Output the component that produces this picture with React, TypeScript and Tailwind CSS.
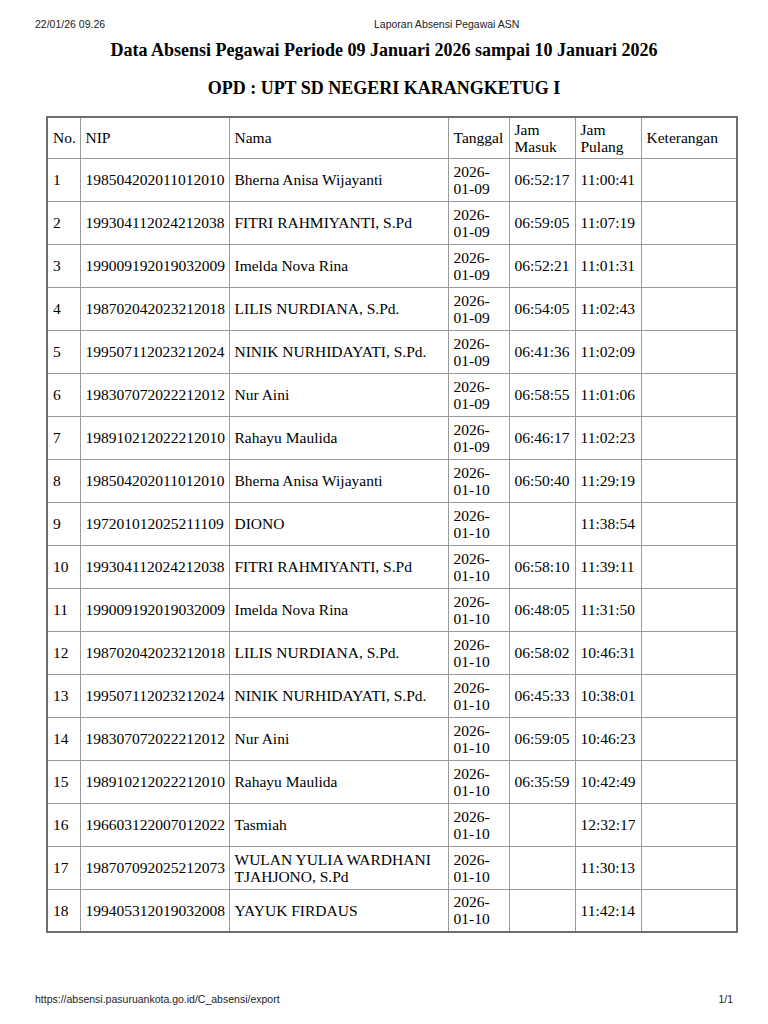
import React from 'react'

type Row = {
  nip: string
  nama: string
  tanggal: string
  masuk: string
  pulang: string
}

const rows: Row[] = [
  { nip: '198504202011012010', nama: 'Bherna Anisa Wijayanti', tanggal: '01-09', masuk: '06:52:17', pulang: '11:00:41' },
  { nip: '199304112024212038', nama: 'FITRI RAHMIYANTI, S.Pd', tanggal: '01-09', masuk: '06:59:05', pulang: '11:07:19' },
  { nip: '199009192019032009', nama: 'Imelda Nova Rina', tanggal: '01-09', masuk: '06:52:21', pulang: '11:01:31' },
  { nip: '198702042023212018', nama: 'LILIS NURDIANA, S.Pd.', tanggal: '01-09', masuk: '06:54:05', pulang: '11:02:43' },
  { nip: '199507112023212024', nama: 'NINIK NURHIDAYATI, S.Pd.', tanggal: '01-09', masuk: '06:41:36', pulang: '11:02:09' },
  { nip: '198307072022212012', nama: 'Nur Aini', tanggal: '01-09', masuk: '06:58:55', pulang: '11:01:06' },
  { nip: '198910212022212010', nama: 'Rahayu Maulida', tanggal: '01-09', masuk: '06:46:17', pulang: '11:02:23' },
  { nip: '198504202011012010', nama: 'Bherna Anisa Wijayanti', tanggal: '01-10', masuk: '06:50:40', pulang: '11:29:19' },
  { nip: '197201012025211109', nama: 'DIONO', tanggal: '01-10', masuk: '', pulang: '11:38:54' },
  { nip: '199304112024212038', nama: 'FITRI RAHMIYANTI, S.Pd', tanggal: '01-10', masuk: '06:58:10', pulang: '11:39:11' },
  { nip: '199009192019032009', nama: 'Imelda Nova Rina', tanggal: '01-10', masuk: '06:48:05', pulang: '11:31:50' },
  { nip: '198702042023212018', nama: 'LILIS NURDIANA, S.Pd.', tanggal: '01-10', masuk: '06:58:02', pulang: '10:46:31' },
  { nip: '199507112023212024', nama: 'NINIK NURHIDAYATI, S.Pd.', tanggal: '01-10', masuk: '06:45:33', pulang: '10:38:01' },
  { nip: '198307072022212012', nama: 'Nur Aini', tanggal: '01-10', masuk: '06:59:05', pulang: '10:46:23' },
  { nip: '198910212022212010', nama: 'Rahayu Maulida', tanggal: '01-10', masuk: '06:35:59', pulang: '10:42:49' },
  { nip: '196603122007012022', nama: 'Tasmiah', tanggal: '01-10', masuk: '', pulang: '12:32:17' },
  { nip: '198707092025212073', nama: 'WULAN YULIA WARDHANI TJAHJONO, S.Pd', tanggal: '01-10', masuk: '', pulang: '11:30:13' },
  { nip: '199405312019032008', nama: 'YAYUK FIRDAUS', tanggal: '01-10', masuk: '', pulang: '11:42:14' },
]

const cell = 'border border-[#9a9a9a] px-[5px] py-0 text-left align-middle font-normal'

export default function App() {
  return (
    <div className="flex min-h-[1024px] w-[768px] flex-col bg-white text-black">
      {/* print header */}
      <div className="flex pl-[35px] pt-[18px] font-['Liberation_Sans',Arial,sans-serif] text-[10.5px] leading-[12px] text-[#222]">
        <span className="w-[339px]">22/01/26 09.26</span>
        <span>Laporan Absensi Pegawai ASN</span>
      </div>

      <div className="font-['Liberation_Serif','Times_New_Roman',serif]">
        <h1 className="mt-[9px] text-center text-[18px] font-bold leading-[22px]">
          Data Absensi Pegawai Periode 09 Januari 2026 sampai 10 Januari 2026
        </h1>
        <h2 className="mt-[16px] text-center text-[18px] font-bold leading-[22px]">
          OPD : UPT SD NEGERI KARANGKETUG I
        </h2>

        <table className="ml-[46px] mt-[17px] w-[690px] table-fixed border-collapse border-2 border-[#6e6e6e] text-[15.5px] leading-[17px]">
          <colgroup>
            <col className="w-[33px]" />
            <col className="w-[149px]" />
            <col className="w-[219px]" />
            <col className="w-[61px]" />
            <col className="w-[66px]" />
            <col className="w-[66px]" />
            <col className="w-[96px]" />
          </colgroup>
          <thead>
            <tr className="h-[41px]">
              <th className={cell}>No.</th>
              <th className={cell}>NIP</th>
              <th className={cell}>Nama</th>
              <th className={`${cell} whitespace-nowrap`}>Tanggal</th>
              <th className={cell}>
                Jam
                <br />
                Masuk
              </th>
              <th className={cell}>
                Jam
                <br />
                Pulang
              </th>
              <th className={`${cell} whitespace-nowrap`}>Keterangan</th>
            </tr>
          </thead>
          <tbody>
            {rows.map((r, i) => (
              <tr key={i} className="h-[43px]">
                <td className={cell}>{i + 1}</td>
                <td className={`${cell} whitespace-nowrap`}>{r.nip}</td>
                <td className={cell}>{r.nama}</td>
                <td className={cell}>
                  2026-
                  <br />
                  {r.tanggal}
                </td>
                <td className={cell}>{r.masuk}</td>
                <td className={cell}>{r.pulang}</td>
                <td className={cell}></td>
              </tr>
            ))}
          </tbody>
        </table>
      </div>

      {/* print footer */}
      <div className="mt-auto flex justify-between pb-[19px] pl-[35px] pr-[35px] font-['Liberation_Sans',Arial,sans-serif] text-[10.5px] leading-[12px] text-[#222]">
        <span>https://absensi.pasuruankota.go.id/C_absensi/export</span>
        <span>1/1</span>
      </div>
    </div>
  )
}
